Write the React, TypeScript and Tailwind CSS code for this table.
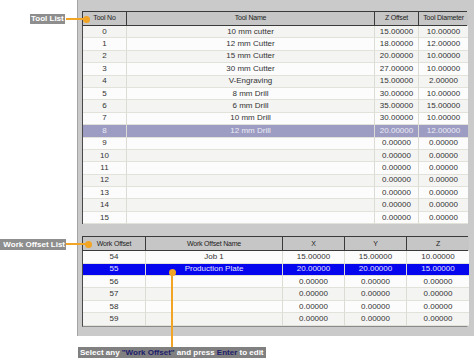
import React from 'react';

const toolRows = [
  { no: '0', name: '10 mm cutter', z: '15.00000', dia: '10.00000' },
  { no: '1', name: '12 mm Cutter', z: '18.00000', dia: '12.00000' },
  { no: '2', name: '15 mm Cutter', z: '20.00000', dia: '10.00000' },
  { no: '3', name: '30 mm Cutter', z: '27.00000', dia: '10.00000' },
  { no: '4', name: 'V-Engraving', z: '15.00000', dia: '2.00000' },
  { no: '5', name: '8 mm Drill', z: '30.00000', dia: '10.00000' },
  { no: '6', name: '6 mm Drill', z: '35.00000', dia: '15.00000' },
  { no: '7', name: '10 mm Drill', z: '30.00000', dia: '10.00000' },
  { no: '8', name: '12 mm Drill', z: '20.00000', dia: '12.00000' },
  ...['9', '10', '11', '12', '13', '14', '15'].map((n) => ({ no: n, name: '', z: '0.00000', dia: '0.00000' })),
];

const offsetRows = [
  { no: '54', name: 'Job 1', x: '15.00000', y: '15.00000', z: '10.00000' },
  { no: '55', name: 'Production Plate', x: '20.00000', y: '20.00000', z: '15.00000' },
  ...['56', '57', '58', '59'].map((n) => ({ no: n, name: '', x: '0.00000', y: '0.00000', z: '0.00000' })),
];

function HeaderCell({ label, last }: { label: string; last?: boolean }) {
  return (
    <div
      className={`flex items-center justify-center bg-[#c6c6c6] text-[7px] tracking-[-0.2px] text-[#222] ${
        last ? '' : 'border-r border-[#3a3a3a]'
      }`}
    >
      {label}
    </div>
  );
}

function BodyCell({ value, tone, last }: { value: string; tone: 'even' | 'odd' | 'sel' | 'blue'; last?: boolean }) {
  const bg =
    tone === 'sel'
      ? 'bg-[#9d9dc3] text-[#ececf6]'
      : tone === 'blue'
      ? 'bg-[#0606ee] text-[#e4e4ff]'
      : tone === 'even'
      ? 'bg-[#f4f4f2] text-[#333]'
      : 'bg-[#fcfcfc] text-[#333]';
  return (
    <div
      className={`flex items-center justify-center text-[8px] leading-none border-b border-[#e2e2da] ${
        last ? '' : 'border-r border-r-[#dcdcd4]'
      } ${bg}`}
    >
      {value}
    </div>
  );
}

export default function App() {
  return (
    <div
      className="relative w-[474px] h-[363px] overflow-hidden bg-white"
      style={{ fontFamily: '"Liberation Sans", Arial, sans-serif' }}
    >
      <div className="ml-[77px] flex flex-col gap-[12px] border-l border-[#a4a4a4] bg-[#cacaca] pt-[11px] pb-[9px] pl-[4px] pr-[6px]">
        {/* tool list */}
        <div className="w-[385px]">
          <div className="grid h-[15px] grid-cols-[44px_248px_44px_49px] border border-[#3a3a3a]">
            <HeaderCell label="Tool No" />
            <HeaderCell label="Tool Name" />
            <HeaderCell label="Z Offset" />
            <HeaderCell label="Tool Diameter" last />
          </div>
          <div className="grid auto-rows-[12.4px] grid-cols-[44px_248px_44px_49px] border-l border-l-[#4a4a4a] border-r border-r-[#e4e4e4]">
            {toolRows.map((r, i) => {
              const tone = r.no === '8' ? 'sel' : i % 2 === 0 ? 'even' : 'odd';
              return (
                <React.Fragment key={r.no}>
                  <BodyCell value={r.no} tone={tone} />
                  <BodyCell value={r.name} tone={tone} />
                  <BodyCell value={r.z} tone={tone} />
                  <BodyCell value={r.dia} tone={tone} last />
                </React.Fragment>
              );
            })}
          </div>
        </div>

        {/* work offset list */}
        <div className="w-[386px]">
          <div className="grid h-[15px] grid-cols-[63px_137px_62px_62px_62px] border border-[#3a3a3a]">
            <HeaderCell label="Work Offset" />
            <HeaderCell label="Work Offset Name" />
            <HeaderCell label="X" />
            <HeaderCell label="Y" />
            <HeaderCell label="Z" last />
          </div>
          <div className="grid auto-rows-[12.4px] grid-cols-[63px_137px_62px_62px_62px] border-l border-l-[#4a4a4a] border-r border-r-[#e4e4e4] border-b border-b-[#8a8a8a]">
            {offsetRows.map((r, i) => {
              const tone = r.no === '55' ? 'blue' : i % 2 === 0 ? 'odd' : 'even';
              return (
                <React.Fragment key={r.no}>
                  <BodyCell value={r.no} tone={tone} />
                  <BodyCell value={r.name} tone={tone} />
                  <BodyCell value={r.x} tone={tone} />
                  <BodyCell value={r.y} tone={tone} />
                  <BodyCell value={r.z} tone={tone} last />
                </React.Fragment>
              );
            })}
          </div>
        </div>
      </div>

      {/* callouts */}
      <div className="absolute left-[30px] top-[14px] flex h-[10px] items-center bg-[#8e8e8e] px-[1px] text-[8px] font-bold text-white">
        Tool List
      </div>
      <div className="absolute left-[66px] top-[18px] h-[2px] w-[20px] bg-[#f2a424]" />
      <div className="absolute left-[83px] top-[16px] h-[7px] w-[7px] rounded-full bg-[#f2a424]" />

      <div className="absolute left-0 top-[239px] flex h-[11px] w-[66px] items-center justify-end overflow-hidden whitespace-nowrap bg-[#8e8e8e] pr-[1px] text-[8px] font-bold text-white">
        Work Offset List
      </div>
      <div className="absolute left-[66px] top-[243px] h-[2px] w-[22px] bg-[#f2a424]" />
      <div className="absolute left-[85px] top-[241px] h-[7px] w-[7px] rounded-full bg-[#f2a424]" />

      <div className="absolute left-[169px] top-[269px] h-[7px] w-[7px] rounded-full bg-[#f2a424]" />
      <div className="absolute left-[171px] top-[272px] h-[75px] w-[2px] bg-[#f2a424]" />
      <div className="absolute left-[78px] top-[347px] flex h-[11px] items-center whitespace-nowrap bg-[#808080] px-[2px] text-[8px] font-bold text-white">
        Select any&nbsp;<span className="text-[#1c1c6c]">"Work Offset"</span>&nbsp;and press&nbsp;
        <span className="text-[#1c1c6c]">Enter</span>&nbsp;to edit
      </div>
    </div>
  );
}
